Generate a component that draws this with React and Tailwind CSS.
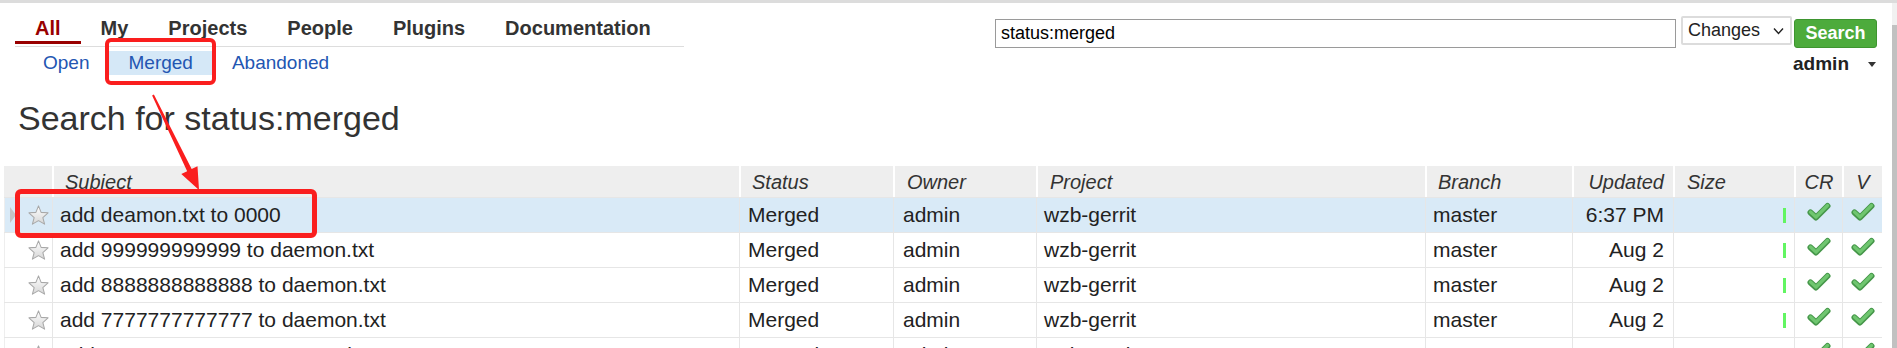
// Gerrit change search -- "status:merged" list with annotations
import React from "react";

const tabs = ["All", "My", "Projects", "People", "Plugins", "Documentation"];
const subTabs = ["Open", "Merged", "Abandoned"];

const rows = [
  { subject: "add deamon.txt to 0000", updated: "6:37 PM", current: true },
  { subject: "add 999999999999 to daemon.txt", updated: "Aug 2" },
  { subject: "add 8888888888888 to daemon.txt", updated: "Aug 2" },
  { subject: "add 7777777777777 to daemon.txt", updated: "Aug 2" },
  { subject: "add 666666666666666666 to daemon.txt", updated: "Aug 2" },
];

const gridCols = "grid grid-cols-[48px_687px_154px_143px_389px_147px_101px_121px_48px_40px]";

const Star = () => (
  <svg width="21" height="20" viewBox="0 0 24 23">
    <defs>
      <linearGradient id="starFill" x1="0" y1="0" x2="0" y2="1">
        <stop offset="0" stopColor="#ffffff" />
        <stop offset="1" stopColor="#d6d6d6" />
      </linearGradient>
    </defs>
    <polygon points="12,1 15,8.5 23,9 17,14.5 19,22 12,18 5,22 7,14.5 1,9 9,8.5"
      fill="url(#starFill)" stroke="#a8a8a8" strokeWidth="1.2" strokeLinejoin="round" />
  </svg>
);

const Check = () => (
  <svg width="24" height="20" viewBox="0 0 24 20">
    <path d="M3.5 10.5 L9 15.5 L20.5 4" fill="none" stroke="#46974a" strokeWidth="6"
      strokeLinecap="round" strokeLinejoin="round" />
    <path d="M3.5 10 L9 15 L20.5 3.5" fill="none" stroke="#6fc66f" strokeWidth="3.2"
      strokeLinecap="round" strokeLinejoin="round" />
  </svg>
);

const HeadCell = ({ children, className = "" }) => (
  <div className={`flex items-center border-l-2 border-white italic text-[20px] text-[#333] ${className}`}>
    {children}
  </div>
);

const Cell = ({ children, className = "" }) => (
  <div className={`flex items-center border-l border-[#e6e6e6] text-[21px] text-[#222] ${className}`}>
    {children}
  </div>
);

export default function App() {
  return (
    <div className="relative w-[1897px] h-[348px] overflow-hidden bg-white flex flex-col"
      style={{ fontFamily: '"Liberation Sans", Arial, sans-serif' }}>
      <div className="h-[3px] bg-[#dcdcdc]" />
      <div className="flex flex-1 min-h-0">
        <div className="flex-1 flex flex-col">
          {/* header */}
          <div className="flex justify-between items-start">
            <div className="flex flex-col">
              <div className="ml-[15px] w-[669px] flex border-b border-[#dddddd] pb-[2px]">
                {tabs.map((t, i) => (
                  <div key={t}
                    className={`px-[20px] pt-[13px] pb-[1px] border-b-[3px] text-[20px] font-bold leading-[24px] ${
                      i === 0 ? "border-[#990000] text-[#990000]" : "border-transparent text-[#333]"
                    }`}>
                    {t}
                  </div>
                ))}
              </div>
              <div className="mt-[4px] ml-[24px] flex gap-[1px]">
                {subTabs.map(t => (
                  <div key={t}
                    className={`px-[19px] h-[24px] leading-[24px] text-[19px] text-[#2356b2] ${
                      t === "Merged" ? "bg-[#d5e8f7]" : ""
                    }`}>
                    {t}
                  </div>
                ))}
              </div>
            </div>

            <div className="mt-[13px] mr-[15px] flex flex-col items-end">
              <div className="flex items-start">
                <input readOnly value="status:merged"
                  className="mt-[3px] w-[681px] h-[29px] border border-[#9a9a9a] pl-[5px] text-[18px] text-black outline-none"
                  style={{ fontFamily: '"Liberation Sans", Arial, sans-serif' }} />
                <div className="ml-[5px] w-[111px] h-[29px] border-2 border-[#dcdcdc] rounded-[2px] flex items-center justify-between pl-[5px] pr-[6px] text-[18px] text-[#222]">
                  <span>Changes</span>
                  <svg width="11" height="8" viewBox="0 0 11 8">
                    <path d="M1 1.5 L5.5 6.5 L10 1.5" fill="none" stroke="#222" strokeWidth="1.4" />
                  </svg>
                </div>
                <div className="ml-[2px] mt-[3px] w-[83px] h-[29px] bg-[#4dab3c] border border-[#3e9530] rounded-[3px] flex items-center justify-center text-white font-bold text-[18px]">
                  Search
                </div>
              </div>
              <div className="mt-[5px] flex items-center">
                <span className="font-bold text-[19px] leading-[22px] text-[#222]">admin</span>
                <span className="ml-[19px] mr-[1px] w-0 h-0 border-l-[4px] border-r-[4px] border-t-[5px] border-l-transparent border-r-transparent border-t-[#333]" />
              </div>
            </div>
          </div>

          <h1 className="mt-[23px] pl-[18px] text-[34px] leading-[40px] font-normal text-[#333]">
            Search for status:merged
          </h1>

          {/* change table */}
          <div className="mt-[28px] ml-[4px] w-[1878px] flex flex-col">
            <div className={`${gridCols} h-[31px] bg-[#eeeeee]`}>
              <div />
              <HeadCell className="pl-[11px]">Subject</HeadCell>
              <HeadCell className="pl-[11px]">Status</HeadCell>
              <HeadCell className="pl-[12px]">Owner</HeadCell>
              <HeadCell className="pl-[12px]">Project</HeadCell>
              <HeadCell className="pl-[11px]">Branch</HeadCell>
              <HeadCell className="justify-end pr-[9px]">Updated</HeadCell>
              <HeadCell className="pl-[12px]">Size</HeadCell>
              <HeadCell className="justify-center">CR</HeadCell>
              <HeadCell className="justify-center">V</HeadCell>
            </div>
            {rows.map((r, i) => (
              <div key={i}
                className={`${gridCols} h-[35px] shrink-0 border-t border-[#e6e6e6] ${r.current ? "bg-[#d9eaf7]" : "bg-white"}`}>
                <div className="flex items-center justify-between pl-[5px] pr-[3px] border-l border-[#eeeeee]">
                  {r.current
                    ? <span className="w-0 h-0 border-l-[6px] border-l-[#c4c4c4] border-y-[8px] border-y-transparent" />
                    : <span />}
                  <Star />
                </div>
                <Cell className="pl-[7px]">{r.subject}</Cell>
                <Cell className="pl-[8px]">Merged</Cell>
                <Cell className="pl-[9px]">admin</Cell>
                <Cell className="pl-[7px]">wzb-gerrit</Cell>
                <Cell className="pl-[7px]">master</Cell>
                <Cell className="justify-end pr-[9px]">{r.updated}</Cell>
                <Cell className="justify-end pr-[8px]">
                  <span className="w-[3px] h-[15px] bg-[#62f562]" />
                </Cell>
                <Cell className="justify-center pb-[6px]"><Check /></Cell>
                <Cell className="justify-center pb-[6px]"><Check /></Cell>
              </div>
            ))}
          </div>
        </div>

        {/* scrollbar */}
        <div className="w-[5px] flex flex-col">
          <div className="h-[22px] bg-[#f1f1f1]" />
          <div className="flex-1 bg-[#c1c1c1]" />
        </div>
      </div>

      {/* red annotations */}
      <div className="absolute left-[105px] top-[38px] w-[111px] h-[47px] border-[4px] border-[#fa1e1e] rounded-[6px] pointer-events-none" />
      <div className="absolute left-[15px] top-[189px] w-[302px] h-[49px] border-[5px] border-[#fa1e1e] rounded-[6px] pointer-events-none" />
      <svg className="absolute left-0 top-0 pointer-events-none" width="1897" height="348">
        <polygon fill="#fa1e1e"
          points="153.9,94.6 191.65,169.1 197.5,166.3 199,190 181.3,174.1 187.15,171.3 152.1,95.4" />
      </svg>
    </div>
  );
}
